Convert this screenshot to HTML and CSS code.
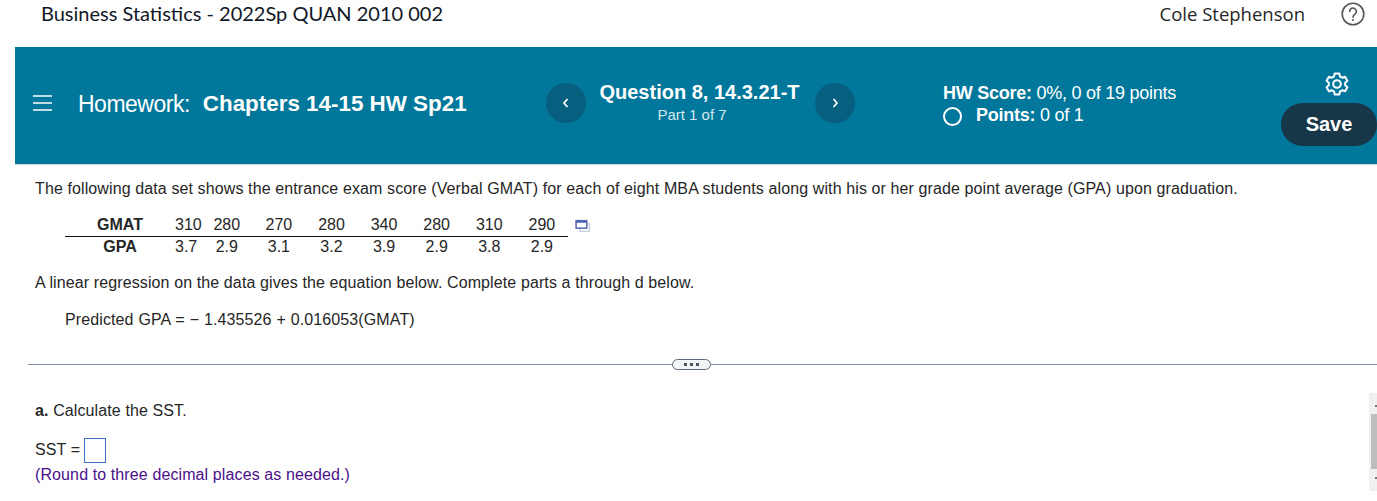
FILE: index.html
```html
<!DOCTYPE html>
<html lang="en">
<head>
<meta charset="utf-8">
<title>Homework</title>
<link rel="stylesheet" href="styles.css">
</head>
<body>
<header class="topbar">
  <div class="course">Business Statistics - 2022Sp QUAN 2010 002</div>
  <div class="user">Cole Stephenson</div>
  <svg class="help" width="24" height="24" viewBox="0 0 24 24" fill="none" stroke="#555" stroke-width="1.6">
    <circle cx="12" cy="12" r="10.8"/>
    <path d="M8.6 9.4a3.4 3.4 0 1 1 5.4 2.8c-1.300.9-2 1.600-2 3.100" stroke-linecap="round"/>
    <circle cx="12" cy="18" r="1" fill="#555" stroke="none"/>
  </svg>
</header>
<section class="banner">
  <div class="hw">
    <svg class="menu" width="19" height="16" viewBox="0 0 19 16" stroke="#fff" stroke-width="1.500">
      <path d="M0 1h19M0 8h19M0 15h19"/>
    </svg>
    <span class="hw-label">Homework:</span>
    <span class="hw-name">Chapters 14-15 HW Sp21</span>
  </div>
  <div class="nav">
    <div class="circle"><svg width="8" height="10" viewBox="0 0 8 10" fill="none" stroke="#fff" stroke-width="1.800"><path d="M5.500 1 2 5l3.500 4"/></svg></div>
    <div class="question">
      <div class="q-title">Question 8, 14.3.21-T</div>
      <div class="q-part">Part 1 of 7</div>
    </div>
    <div class="circle"><svg width="8" height="10" viewBox="0 0 8 10" fill="none" stroke="#fff" stroke-width="1.800"><path d="M2.500 1 6 5 2.500 9"/></svg></div>
  </div>
  <div class="score">
    <div class="score-line"><b>HW Score:</b> 0%, 0 of 19 points</div>
    <div class="points-line"><span class="ring"></span><span><b>Points:</b> 0 of 1</span></div>
  </div>
  <div class="actions">
    <svg class="gear" width="24" height="24" viewBox="0 0 24 24" fill="none" stroke="#fff" stroke-width="2" stroke-linejoin="round">
      <path d="M9.700 1.500h4.600l.7 3 2.200 1.200 2.900-.9 2.300 4-2.200 2v2.400l2.200 2-2.300 4-2.900-.9-2.200 1.200-.7 3H9.700l-.7-3-2.200-1.200-2.900.9-2.300-4 2.200-2v-2.400l-2.200-2 2.300-4 2.900.9L9 4.500z"/>
      <circle cx="12" cy="12" r="3.800"/>
    </svg>
    <button class="save">Save</button>
  </div>
</section>
<main class="content">
  <p class="intro">The following data set shows the entrance exam score (Verbal GMAT) for each of eight MBA students along with his or her grade point average (GPA) upon graduation.</p>
  <div class="table-row">
    <table class="data">
      <tr class="r1"><th>GMAT</th><td>310</td><td>280</td><td>270</td><td>280</td><td>340</td><td>280</td><td>310</td><td>290</td></tr>
      <tr class="r2"><th>GPA</th><td>3.7</td><td>2.9</td><td>3.1</td><td>3.2</td><td>3.9</td><td>2.9</td><td>3.8</td><td>2.9</td></tr>
    </table>
    <svg class="copy" width="16" height="14" viewBox="0 0 15 13" fill="none">
      <rect x="4.500" y="4.500" width="9" height="7" stroke="#b9c3e2"/>
      <rect x="1" y="1.500" width="10" height="7" fill="#fff" stroke="#5567b0" stroke-width="1.400"/>
      <path d="M1 2.500h10" stroke="#5567b0" stroke-width="2"/>
    </svg>
  </div>
  <p class="regress">A linear regression on the data gives the equation below. Complete parts a through d below.</p>
  <p class="equation">Predicted GPA = &#8722; 1.435526 + 0.016053(GMAT)</p>
</main>
<div class="divider">
  <div class="line short"></div>
  <div class="pill"><i></i><i></i><i></i></div>
  <div class="line"></div>
</div>
<section class="answer">
  <p class="part"><b>a.</b> Calculate the SST.</p>
  <div class="sst"><span class="sst-label">SST =</span><span class="box"></span></div>
  <p class="hint">(Round to three decimal places as needed.)</p>
</section>
<div class="scrollbar">
  <span class="arrow up"></span>
  <span class="thumb"></span>
  <span class="arrow down"></span>
</div>
</body>
</html>
```
FILE: styles.css
```css
* { box-sizing: border-box; }
html, body { margin: 0; padding: 0; }
body {
  width: 1377px;
  height: 501px;
  overflow: hidden;
  position: relative;
  background: #fff;
  color: #262626;
  font-family: "Liberation Sans", Arial, sans-serif;
  font-size: 16px;
}
p { margin: 0; }

.topbar {
  height: 47px;
  display: flex;
  align-items: center;
  padding: 0 12px 21px 41px;
}
.course { font-family: "Lato", sans-serif; font-size: 20px; color: #111827; flex: 1; }
.user { font-family: "Open Sans", sans-serif; font-size: 18.500px; color: #262626; margin-right: 36px; }
.help { display: block; margin-top: 2px; }

.banner {
  margin-left: 15px;
  height: 118px;
  background: #00779b;
  border-bottom: 1px solid #c9d3dc;
  color: #fff;
  display: flex;
  position: relative;
}
.hw {
  width: 531px;
  display: flex;
  align-items: center;
  padding: 0 0 5px 18px;
}
.menu { display: block; margin-right: 26px; flex: none; }
.hw-label { font-size: 23px; letter-spacing: -.5px; margin-right: 13px; position: relative; top: 1px; }
.hw-name { font-size: 22.400px; font-weight: bold; position: relative; top: 1px; }

.nav { width: 309px; display: flex; align-items: flex-start; padding-top: 36px; }
.circle {
  width: 40px; height: 40px;
  border-radius: 50%;
  background: #065f7f;
  display: flex; align-items: center; justify-content: center;
  flex: none;
}
.question { width: 229px; text-align: center; margin-top: -3px; padding-right: 2px; }
.q-title { font-size: 20px; font-weight: bold; line-height: 24px; }
.q-part { font-size: 15px; line-height: 21px; color: #d5e8ef; padding-right: 15px; }

.score { width: 338px; margin-left: 88px; padding-top: 35px; font-size: 18px; line-height: 23px; letter-spacing: -.25px; }
.points-line { display: flex; align-items: center; margin-top: -1px; }
.ring { width: 19px; height: 19px; border: 2.500px solid #fff; border-radius: 50%; margin-right: 14px; position: relative; top: 1px; }

.actions {
  position: absolute;
  right: 0; top: 0;
  width: 96px;
  display: flex; flex-direction: column; align-items: center;
}
.gear { display: block; margin: 25px 28px 7px 0; align-self: flex-end; }
.save {
  width: 96px; height: 43px;
  border: 0; border-radius: 22px;
  background: #173647;
  color: #fff;
  font: bold 20px "Liberation Sans", Arial, sans-serif;
}

.content { padding: 15px 0 0 35px; letter-spacing: .11px; }
.intro { line-height: 18px; }
.table-row { display: flex; align-items: flex-start; margin: 17px 0 0 30px; }
.data { border-collapse: collapse; font-size: 16px; table-layout: fixed; width: 503px; letter-spacing: 0; }
.data th { width: 110px; padding: 0; text-align: center; font-weight: bold; }
.data td { padding: 0; text-align: center; width: 52.600px; }
.data td:nth-of-type(1) { width: 25px; padding-right: 4px; }
.data td:nth-of-type(2) { padding-left: 1px; }
.data tr.r1 th, .data tr.r1 td { height: 21px; border-bottom: 1px solid #111; }
.data tr.r2 th, .data tr.r2 td { height: 22px; }
.copy { display: block; margin: 4px 0 0 7px; flex: none; }
.regress { line-height: 18px; margin-top: 16px; }
.equation { line-height: 18px; margin: 19px 0 0 30px; word-spacing: .3px; }

.divider { display: flex; align-items: center; margin: 29px 0 0 28px; height: 12px; }
.line { flex: 1; height: 1px; background: #8391a4; }
.line.short { flex: none; width: 644px; }
.pill {
  width: 39px; height: 11px;
  border: 1px solid #5f6b7d;
  border-radius: 6px;
  background: #f3f4f7;
  display: flex; align-items: center; justify-content: center; gap: 3px;
}
.pill i { width: 3px; height: 3px; background: #4a5466; display: block; }

.answer { padding: 32px 0 0 35px; letter-spacing: .11px; }
.part { line-height: 18px; }
.sst { display: flex; align-items: center; margin-top: 18px; height: 25px; gap: 4px; }
.sst-label { margin-top: -2px; }
.box { width: 22px; height: 25px; border: 1.500px solid #3b73c9; background: #fff; }
.hint { color: #4b0f8a; line-height: 18px; margin-top: 3px; }

.scrollbar {
  position: absolute;
  right: 0; top: 393px;
  width: 8px; height: 98px;
  background: #f0f0f0;
}
.thumb { position: absolute; left: 2px; top: 21px; width: 6px; height: 55px; background: #bdbdbd; }
.arrow { position: absolute; left: 6px; width: 2px; height: 2px; background: #777; }
.arrow.up { top: 12px; }
.arrow.down { top: 84px; }
```
